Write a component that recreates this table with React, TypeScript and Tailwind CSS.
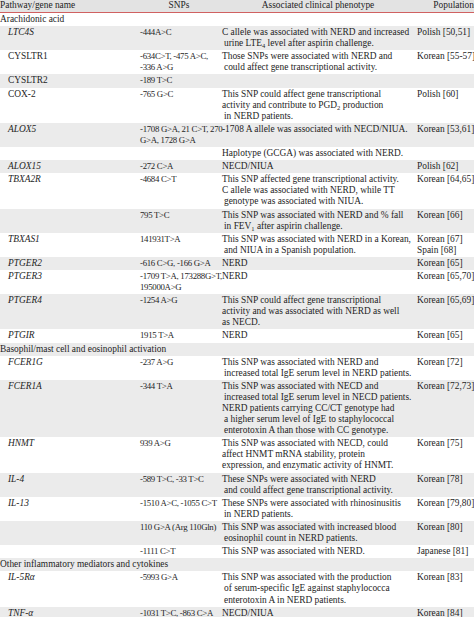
import React from "react";

type Line = { t: React.ReactNode; i?: boolean };
type Row =
  | { kind: "section"; title: string }
  | {
      kind: "row";
      gene?: string;
      italic?: boolean;
      snp: string[];
      ph: Line[];
      pop: string[];
    };

const L = (t: React.ReactNode, i = false): Line => ({ t, i });

const Sub = ({ children }: { children: React.ReactNode }) => (
  <span className="text-[6.5px] relative top-[2px]">{children}</span>
);

const rows: Row[] = [
  { kind: "section", title: "Arachidonic acid" },
  {
    kind: "row",
    gene: "LTC4S",
    italic: true,
    snp: ["-444A>C"],
    ph: [
      L("C allele was associated with NERD and increased"),
      L(
        <>
          urine LTE<Sub>4</Sub> level after aspirin challenge.
        </>,
        true
      ),
    ],
    pop: ["Polish [50,51]"],
  },
  {
    kind: "row",
    gene: "CYSLTR1",
    snp: ["-634C>T, -475 A>C,", "-336 A>G"],
    ph: [
      L("Those SNPs were associated with NERD and"),
      L("could affect gene transcriptional activity.", true),
    ],
    pop: ["Korean [55-57]"],
  },
  { kind: "row", gene: "CYSLTR2", snp: ["-189 T>C"], ph: [], pop: [] },
  {
    kind: "row",
    gene: "COX-2",
    snp: ["-765 G>C"],
    ph: [
      L("This SNP could affect gene transcriptional"),
      L(
        <>
          activity and contribute to PGD<Sub>2</Sub> production
        </>
      ),
      L("in NERD patients.", true),
    ],
    pop: ["Polish [60]"],
  },
  {
    kind: "row",
    gene: "ALOX5",
    italic: true,
    snp: ["-1708 G>A, 21 C>T, 270", "G>A, 1728 G>A"],
    ph: [L("-1708 A allele was associated with NECD/NIUA.")],
    pop: ["Korean [53,61]"],
  },
  {
    kind: "row",
    snp: [],
    ph: [L("Haplotype (GCGA) was associated with NERD.")],
    pop: [],
  },
  {
    kind: "row",
    gene: "ALOX15",
    italic: true,
    snp: ["-272 C>A"],
    ph: [L("NECD/NIUA")],
    pop: ["Polish [62]"],
  },
  {
    kind: "row",
    gene: "TBXA2R",
    italic: true,
    snp: ["-4684 C>T"],
    ph: [
      L("This SNP affected gene transcriptional activity."),
      L("C allele was associated with NERD, while TT"),
      L("genotype was associated with NIUA.", true),
    ],
    pop: ["Korean [64,65]"],
  },
  {
    kind: "row",
    snp: ["795 T>C"],
    ph: [
      L("This SNP was associated with NERD and % fall"),
      L(
        <>
          in FEV<Sub>1</Sub> after aspirin challenge.
        </>,
        true
      ),
    ],
    pop: ["Korean [66]"],
  },
  {
    kind: "row",
    gene: "TBXAS1",
    italic: true,
    snp: ["141931T>A"],
    ph: [
      L("This SNP was associated with NERD in a Korean,"),
      L("and NIUA in a Spanish population.", true),
    ],
    pop: ["Korean [67]", "Spain [68]"],
  },
  {
    kind: "row",
    gene: "PTGER2",
    italic: true,
    snp: ["-616 C>G, -166 G>A"],
    ph: [L("NERD")],
    pop: ["Korean [65]"],
  },
  {
    kind: "row",
    gene: "PTGER3",
    italic: true,
    snp: ["-1709 T>A, 173288G>T,", "195000A>G"],
    ph: [L("NERD")],
    pop: ["Korean [65,70]"],
  },
  {
    kind: "row",
    gene: "PTGER4",
    italic: true,
    snp: ["-1254 A>G"],
    ph: [
      L("This SNP could affect gene transcriptional"),
      L("activity and was associated with NERD as well"),
      L("as NECD."),
    ],
    pop: ["Korean [65,69]"],
  },
  {
    kind: "row",
    gene: "PTGIR",
    italic: true,
    snp: ["1915 T>A"],
    ph: [L("NERD")],
    pop: ["Korean [65]"],
  },
  { kind: "section", title: "Basophil/mast cell and eosinophil activation" },
  {
    kind: "row",
    gene: "FCER1G",
    italic: true,
    snp: ["-237 A>G"],
    ph: [
      L("This SNP was associated with NERD and"),
      L("increased total IgE serum level in NERD patients.", true),
    ],
    pop: ["Korean [72]"],
  },
  {
    kind: "row",
    gene: "FCER1A",
    italic: true,
    snp: ["-344 T>A"],
    ph: [
      L("This SNP was associated with NECD and"),
      L("increased total IgE serum level in NECD patients.", true),
      L("NERD patients carrying CC/CT genotype had"),
      L("a higher serum level of IgE to staphylococcal", true),
      L("enterotoxin A than those with CC genotype.", true),
    ],
    pop: ["Korean [72,73]"],
  },
  {
    kind: "row",
    gene: "HNMT",
    italic: true,
    snp: ["939 A>G"],
    ph: [
      L("This SNP was associated with NECD, could"),
      L("affect HNMT mRNA stability, protein"),
      L("expression, and enzymatic activity of HNMT."),
    ],
    pop: ["Korean [75]"],
  },
  {
    kind: "row",
    gene: "IL-4",
    italic: true,
    snp: ["-589 T>C, -33 T>C"],
    ph: [
      L("These SNPs were associated with NERD"),
      L("and could affect gene transcriptional activity.", true),
    ],
    pop: ["Korean [78]"],
  },
  {
    kind: "row",
    gene: "IL-13",
    italic: true,
    snp: ["-1510 A>C, -1055 C>T"],
    ph: [
      L("These SNPs were associated with rhinosinusitis"),
      L("in NERD patients.", true),
    ],
    pop: ["Korean [79,80]"],
  },
  {
    kind: "row",
    snp: ["110 G>A (Arg 110Gln)"],
    ph: [
      L("This SNP was associated with increased blood"),
      L("eosinophil count in NERD patients.", true),
    ],
    pop: ["Korean [80]"],
  },
  {
    kind: "row",
    snp: ["-1111 C>T"],
    ph: [L("This SNP was associated with NERD.")],
    pop: ["Japanese [81]"],
  },
  { kind: "section", title: "Other inflammatory mediators and cytokines" },
  {
    kind: "row",
    gene: "IL-5Rα",
    italic: true,
    snp: ["-5993 G>A"],
    ph: [
      L("This SNP was associated with the production"),
      L("of serum-specific IgE against staphylococca", true),
      L("enterotoxin A in NERD patients.", true),
    ],
    pop: ["Korean [83]"],
  },
  {
    kind: "row",
    gene: "TNF-α",
    italic: true,
    snp: ["-1031 T>C, -863 C>A"],
    ph: [L("NECD/NIUA")],
    pop: ["Korean [84]"],
  },
];

export default function App() {
  return (
    <div
      className="w-[474px] h-[617px] overflow-hidden bg-white text-[#1e1e1e] text-[9.4px] leading-[11.1px]"
      style={{ fontFamily: '"Liberation Serif", "DejaVu Serif", serif' }}
    >
      <div className="grid grid-cols-[138px_82px_196px_58px] bg-[#e3e3e3] border-b border-[#d06060] h-[13px] items-start whitespace-nowrap">
        <div>Pathway/gene name</div>
        <div className="text-center">SNPs</div>
        <div className="text-center">Associated clinical phenotype</div>
        <div className="text-right">Population</div>
      </div>
      {rows.map((r, idx) => {
        const gray = idx % 2 === 1;
        const bg = gray ? "bg-[#ebebeb]" : "bg-white";
        if (r.kind === "section") {
          return (
            <div key={idx} className={`${bg} py-px whitespace-nowrap`}>
              {r.title}
            </div>
          );
        }
        return (
          <div
            key={idx}
            className={`${bg} grid grid-cols-[138px_84px_195px_57px] py-px whitespace-nowrap`}
          >
            <div className={`pl-[8px] ${r.italic ? "italic" : ""}`}>
              {r.gene ?? ""}
            </div>
            <div className="text-[8.8px] tracking-[-0.3px] pl-[2px]">
              {r.snp.map((s, k) => (
                <div key={k}>{s}</div>
              ))}
            </div>
            <div>
              {r.ph.map((l, k) => (
                <div key={k} className={l.i ? "pl-[2px]" : ""}>
                  {l.t}
                </div>
              ))}
            </div>
            <div>
              {r.pop.map((p, k) => (
                <div key={k}>{p}</div>
              ))}
            </div>
          </div>
        );
      })}
    </div>
  );
}
